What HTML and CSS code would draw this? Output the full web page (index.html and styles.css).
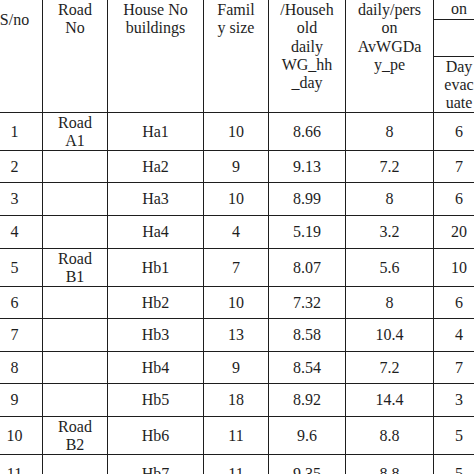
FILE: index.html
```html
<!DOCTYPE html>
<html>
<head>
<meta charset="utf-8">
<link rel="stylesheet" href="styles.css">
</head>
<body>
<table class="data">
  <colgroup>
    <col class="c-sno">
    <col class="c-road">
    <col class="c-house">
    <col class="c-fam">
    <col class="c-hh">
    <col class="c-pers">
    <col class="c-day">
  </colgroup>
  <thead>
    <tr class="h-a">
      <th rowspan="3" class="sno">S/no</th>
      <th rowspan="3">Road<br>No</th>
      <th rowspan="3">House No<br>buildings</th>
      <th rowspan="3">Famil<br>y size</th>
      <th rowspan="3">/Househ<br>old<br>daily<br>WG_hh<br>_day</th>
      <th rowspan="3">daily/pers<br>on<br>AvWGDa<br>y_pe</th>
      <th class="on">on</th>
    </tr>
    <tr class="h-b">
      <th></th>
    </tr>
    <tr class="h-c">
      <th class="day">Day<br>evac<br>uate</th>
    </tr>
  </thead>
  <tbody>
    <tr class="h38"><td>1</td><td>Road<br>A1</td><td>Ha1</td><td>10</td><td>8.66</td><td>8</td><td>6</td></tr>
    <tr class="h32"><td>2</td><td></td><td>Ha2</td><td>9</td><td>9.13</td><td>7.2</td><td>7</td></tr>
    <tr class="h33"><td>3</td><td></td><td>Ha3</td><td>10</td><td>8.99</td><td>8</td><td>6</td></tr>
    <tr class="h33"><td>4</td><td></td><td>Ha4</td><td>4</td><td>5.19</td><td>3.2</td><td>20</td></tr>
    <tr class="h38"><td>5</td><td>Road<br>B1</td><td>Hb1</td><td>7</td><td>8.07</td><td>5.6</td><td>10</td></tr>
    <tr class="h32"><td>6</td><td></td><td>Hb2</td><td>10</td><td>7.32</td><td>8</td><td>6</td></tr>
    <tr class="h33"><td>7</td><td></td><td>Hb3</td><td>13</td><td>8.58</td><td>10.4</td><td>4</td></tr>
    <tr class="h32"><td>8</td><td></td><td>Hb4</td><td>9</td><td>8.54</td><td>7.2</td><td>7</td></tr>
    <tr class="h33"><td>9</td><td></td><td>Hb5</td><td>18</td><td>8.92</td><td>14.4</td><td>3</td></tr>
    <tr class="h38"><td>10</td><td>Road<br>B2</td><td>Hb6</td><td>11</td><td>9.6</td><td>8.8</td><td>5</td></tr>
    <tr class="h38"><td>11</td><td></td><td>Hb7</td><td>11</td><td>9.35</td><td>8.8</td><td>5</td></tr>
  </tbody>
</table>
</body>
</html>
```
FILE: styles.css
```css
html, body {
  margin: 0;
  padding: 0;
  overflow: hidden;
  background: #fff;
}

.data {
  border-collapse: collapse;
  table-layout: fixed;
  width: 498px;
  margin-left: -14px;
  font-family: "Liberation Serif", "Times New Roman", serif;
  font-size: 16px;
  line-height: 18.3px;
  color: #1e1e1e;
}

.c-sno { width: 56px; }
.c-road { width: 65px; }
.c-house { width: 96px; }
.c-fam { width: 65px; }
.c-hh { width: 77px; }
.c-pers { width: 88px; }
.c-day { width: 51px; }

.data th,
.data td {
  border: 1px solid #1e1e1e;
  padding: 0;
  text-align: center;
  font-weight: normal;
  white-space: nowrap;
  overflow: hidden;
}

.data thead th {
  border-top: none;
  vertical-align: top;
  padding-top: 1px;
}

.data thead th.sno {
  padding-top: 11px;
}

.h-a { height: 19px; }
.h-b { height: 37px; }
.h-c { height: 56px; }

.data thead th.on {
  padding-top: 0;
  line-height: 18px;
}

.data thead th.day {
  padding-top: 1px;
}

.data td {
  vertical-align: middle;
}

.h38 { height: 38px; }
.h32 { height: 32px; }
.h33 { height: 33px; }
```
